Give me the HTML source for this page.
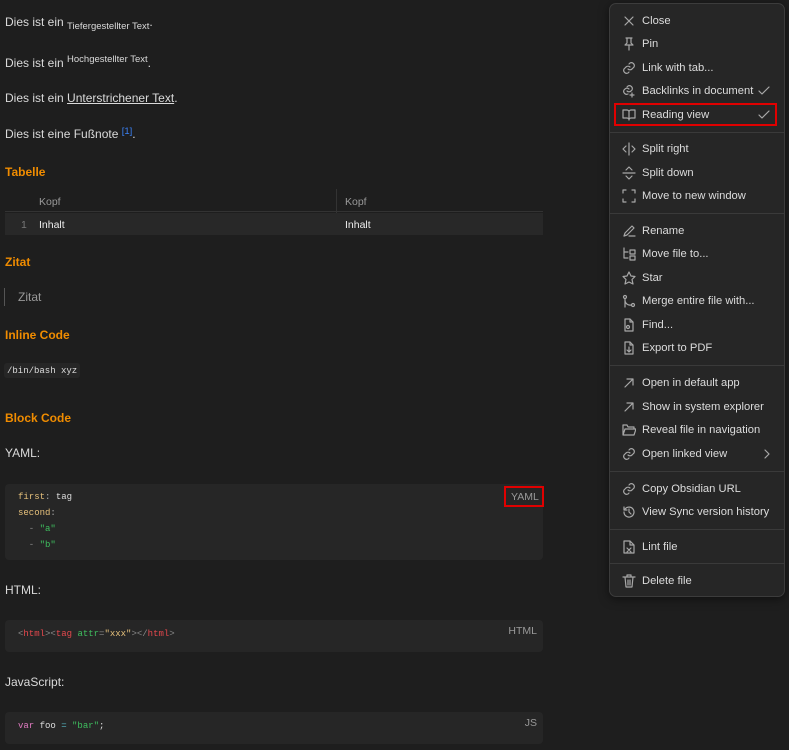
<!DOCTYPE html>
<html><head><meta charset="utf-8">
<style>
*{margin:0;padding:0;box-sizing:border-box}
body{width:789px;height:750px;background:#1e1e1e;color:#dadada;font-family:"Liberation Sans",sans-serif;font-size:12px;position:relative;overflow:hidden}
.a{position:absolute;white-space:nowrap;line-height:16px}
.h{color:#f08c00;font-weight:bold;font-size:12px}
.mono{font-family:"Liberation Mono",monospace;font-size:9px}
.cb{position:absolute;left:5px;width:538px;background:#262626;border-radius:4px}
.lbl{position:absolute;right:6px;font-size:10.5px;color:#999}
.menu{position:absolute;left:609px;top:3px;width:176px;height:594px;background:#262626;border:1px solid #3c3c3c;border-radius:7px;box-shadow:0 2px 10px rgba(0,0,0,.5)}
.mi{position:absolute;left:32px;font-size:11.2px;color:#dcdcdc;line-height:14px;white-space:nowrap}
.ic{position:absolute;left:12px;width:14px;height:14px}
.sep{position:absolute;left:0;right:0;height:1px;background:#3a3a3a}
svg{stroke:#a8a8a8;fill:none;stroke-width:1.2;stroke-linecap:round;stroke-linejoin:round}
</style></head><body>
<div class="a" style="left:5px;top:14px">Dies ist ein <span style="font-size:9.5px;position:relative;top:3px">Tiefergestellter Text</span>.</div>
<div class="a" style="left:5px;top:55px">Dies ist ein <span style="font-size:9.5px;position:relative;top:-5px">Hochgestellter Text</span>.</div>
<div class="a" style="left:5px;top:90px">Dies ist ein <span style="text-decoration:underline">Unterstrichener Text</span>.</div>
<div class="a" style="left:5px;top:126px">Dies ist eine Fußnote <span style="color:#3b82f6;font-size:9.5px;position:relative;top:-4px">[1]</span>.</div>
<div class="a h" style="left:5px;top:164px">Tabelle</div>
<div style="position:absolute;left:5px;top:190px;width:538px;height:22px;border-bottom:1px solid #333"></div>
<div style="position:absolute;left:336px;top:189px;width:1px;height:46px;background:#333"></div>
<div style="position:absolute;left:5px;top:213px;width:538px;height:22px;background:#282828"></div>
<div class="a" style="left:39px;top:194px;font-size:10.5px;color:#999">Kopf</div>
<div class="a" style="left:345px;top:194px;font-size:10.5px;color:#999">Kopf</div>
<div class="a" style="left:21px;top:217px;font-size:10.5px;color:#777">1</div>
<div class="a" style="left:39px;top:217px;font-size:10.5px;color:#eee">Inhalt</div>
<div class="a" style="left:345px;top:217px;font-size:10.5px;color:#eee">Inhalt</div>
<div class="a h" style="left:5px;top:254px">Zitat</div>
<div style="position:absolute;left:4px;top:288px;width:1px;height:18px;background:#555"></div>
<div class="a" style="left:18px;top:289px;color:#999">Zitat</div>
<div class="a h" style="left:5px;top:327px">Inline Code</div>
<div style="position:absolute;left:4px;top:363px;width:76px;height:15px;background:#262626;border-radius:3px"></div>
<div class="a mono" style="left:7px;top:363px;color:#ddd">/bin/bash xyz</div>
<div class="a h" style="left:5px;top:410px">Block Code</div>
<div class="a" style="left:5px;top:445px">YAML:</div>
<div class="cb" style="top:484px;height:76px">
<div class="a mono" style="left:13px;top:5px;color:#e5c07b">first<span style="color:#aaa">:</span> <span style="color:#ddd">tag</span></div>
<div class="a mono" style="left:13px;top:21px;color:#e5c07b">second<span style="color:#aaa">:</span></div>
<div class="a mono" style="left:13px;top:37px;color:#888">&nbsp;&nbsp;- <span style="color:#3fbf5f">"a"</span></div>
<div class="a mono" style="left:13px;top:53px;color:#888">&nbsp;&nbsp;- <span style="color:#3fbf5f">"b"</span></div>
</div>
<div style="position:absolute;left:504px;top:486px;width:40px;height:21px;border:2px solid #e00000"></div>
<div class="a" style="left:511px;top:489px;font-size:10.5px;color:#999">YAML</div>
<div class="a" style="left:5px;top:582px">HTML:</div>
<div class="cb" style="top:620px;height:32px">
<div class="a mono" style="left:13px;top:6px;color:#888">&lt;<span style="color:#e5484d">html</span>&gt;&lt;<span style="color:#e5484d">tag</span> <span style="color:#3fbf5f">attr</span>=<span style="color:#e5c07b">"xxx"</span>&gt;&lt;/<span style="color:#e5484d">html</span>&gt;</div>
<div class="lbl" style="top:5px">HTML</div>
</div>
<div class="a" style="left:5px;top:674px">JavaScript:</div>
<div class="cb" style="top:712px;height:32px">
<div class="a mono" style="left:13px;top:6px;color:#ddd"><span style="color:#e07bc0">var</span> foo <span style="color:#56b6c2">=</span> <span style="color:#3fbf5f">"bar"</span>;</div>
<div class="lbl" style="top:5px">JS</div>
</div>

<div class="menu">
<svg class="ic" style="top:10px" viewBox="0 0 14 14"><path d="M3 3l8 8M11 3l-8 8"/></svg><div class="mi" style="top:10px">Close</div>
<svg class="ic" style="top:33px" viewBox="0 0 14 14"><path d="M4 1h6M5 1v5l-2 2h8L9 6V1M7 8v5"/></svg><div class="mi" style="top:33px">Pin</div>
<svg class="ic" style="top:57px" viewBox="0 0 14 14"><path d="M6 8a3 3 0 0 0 4 0l2-2a3 3 0 0 0-4-4l-1 1M8 6a3 3 0 0 0-4 0l-2 2a3 3 0 0 0 4 4l1-1"/></svg><div class="mi" style="top:57px">Link with tab...</div>
<svg class="ic" style="top:80px" viewBox="0 0 14 14"><path d="M5 7a3 3 0 0 0 4 0l1-1a3 3 0 0 0-4-4L5 3M7 5a3 3 0 0 0-4 0L2 6a3 3 0 0 0 4 4M10 9v4M8 11h4"/></svg><div class="mi" style="top:80px">Backlinks in document</div>
<svg class="ic" style="top:80px;left:147px" viewBox="0 0 14 14"><path d="M2 7l3 3 7-7"/></svg>
<div style="position:absolute;left:4px;top:99px;width:163px;height:23px;border:2px solid #e00000"></div>
<svg class="ic" style="top:104px" viewBox="0 0 14 14"><path d="M1 2h4a2 2 0 0 1 2 2v8a2 2 0 0 0-2-2H1zM13 2H9a2 2 0 0 0-2 2v8a2 2 0 0 1 2-2h4z"/></svg><div class="mi" style="top:104px">Reading view</div>
<svg class="ic" style="top:104px;left:147px" viewBox="0 0 14 14"><path d="M2 7l3 3 7-7"/></svg>
<div class="sep" style="top:128px"></div>
<svg class="ic" style="top:138px" viewBox="0 0 14 14"><path d="M7 1v12M4 4L1 7l3 3M10 4l3 3-3 3"/></svg><div class="mi" style="top:138px">Split right</div>
<svg class="ic" style="top:162px" viewBox="0 0 14 14"><path d="M1 7h12M4 4l3-3 3 3M4 10l3 3 3-3"/></svg><div class="mi" style="top:162px">Split down</div>
<svg class="ic" style="top:185px" viewBox="0 0 14 14"><path d="M1 4V1h3M10 1h3v3M13 10v3h-3M4 13H1v-3"/></svg><div class="mi" style="top:185px">Move to new window</div>
<div class="sep" style="top:209px"></div>
<svg class="ic" style="top:220px" viewBox="0 0 14 14"><path d="M2 12l1-3 7-7 2 2-7 7zM7 12h6"/></svg><div class="mi" style="top:220px">Rename</div>
<svg class="ic" style="top:243px" viewBox="0 0 14 14"><path d="M2 1v10h4M2 5h4M8 3h5v4H8zM8 9h5v4H8z"/></svg><div class="mi" style="top:243px">Move file to...</div>
<svg class="ic" style="top:267px" viewBox="0 0 14 14"><path d="M7 1l2 4 4 .5-3 3 1 4.5-4-2-4 2 1-4.5-3-3 4-.5z"/></svg><div class="mi" style="top:267px">Star</div>
<svg class="ic" style="top:290px" viewBox="0 0 14 14"><circle cx="3" cy="3" r="1.5"/><circle cx="11" cy="11" r="1.5"/><path d="M3 5v8M3 6a5 5 0 0 0 6 5"/></svg><div class="mi" style="top:290px">Merge entire file with...</div>
<svg class="ic" style="top:314px" viewBox="0 0 14 14"><path d="M8 1H3v12h8V4zM8 1v3h3"/><circle cx="6" cy="9" r="1.5"/></svg><div class="mi" style="top:314px">Find...</div>
<svg class="ic" style="top:337px" viewBox="0 0 14 14"><path d="M8 1H3v12h8V4zM8 1v3h3M7 6v5M5 9l2 2 2-2"/></svg><div class="mi" style="top:337px">Export to PDF</div>
<div class="sep" style="top:361px"></div>
<svg class="ic" style="top:372px" viewBox="0 0 14 14"><path d="M3 11l8-8M5 3h6v6"/></svg><div class="mi" style="top:372px">Open in default app</div>
<svg class="ic" style="top:396px" viewBox="0 0 14 14"><path d="M3 11l8-8M5 3h6v6"/></svg><div class="mi" style="top:396px">Show in system explorer</div>
<svg class="ic" style="top:419px" viewBox="0 0 14 14"><path d="M1 12V2h4l1 2h6v2M1 12l2-6h11l-2 6z"/></svg><div class="mi" style="top:419px">Reveal file in navigation</div>
<svg class="ic" style="top:443px" viewBox="0 0 14 14"><path d="M6 8a3 3 0 0 0 4 0l2-2a3 3 0 0 0-4-4l-1 1M8 6a3 3 0 0 0-4 0l-2 2a3 3 0 0 0 4 4l1-1"/></svg><div class="mi" style="top:443px">Open linked view</div>
<svg class="ic" style="top:443px;left:150px" viewBox="0 0 14 14"><path d="M5 3l4 4-4 4"/></svg>
<div class="sep" style="top:467px"></div>
<svg class="ic" style="top:478px" viewBox="0 0 14 14"><path d="M6 8a3 3 0 0 0 4 0l2-2a3 3 0 0 0-4-4l-1 1M8 6a3 3 0 0 0-4 0l-2 2a3 3 0 0 0 4 4l1-1"/></svg><div class="mi" style="top:478px">Copy Obsidian URL</div>
<svg class="ic" style="top:501px" viewBox="0 0 14 14"><path d="M2 7a5 5 0 1 0 1.5-3.5L2 5M2 2v3h3M7 4v3l2 2"/></svg><div class="mi" style="top:501px">View Sync version history</div>
<div class="sep" style="top:525px"></div>
<svg class="ic" style="top:536px" viewBox="0 0 14 14"><path d="M8 1H2v12h10V5zM8 1v4h4M5 8l4 4M9 8l-4 4"/></svg><div class="mi" style="top:536px">Lint file</div>
<div class="sep" style="top:559px"></div>
<svg class="ic" style="top:570px" viewBox="0 0 14 14"><path d="M1 3h12M5 3V1h4v2M3 3l1 10h6l1-10M6 6v5M8 6v5"/></svg><div class="mi" style="top:570px">Delete file</div>
</div>
</body></html>
